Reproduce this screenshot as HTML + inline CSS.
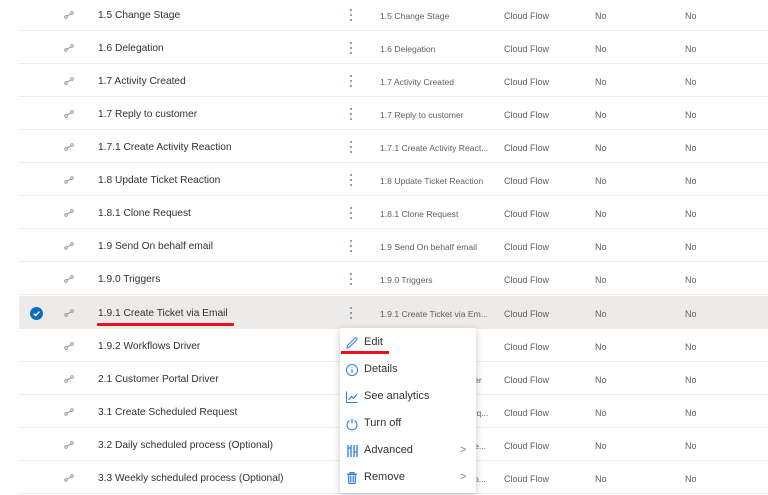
<!DOCTYPE html>
<html><head><style>
*{margin:0;padding:0;box-sizing:border-box}
body{width:768px;height:494px;overflow:hidden;background:#fff;font-family:"Segoe UI","Liberation Sans",sans-serif;color:#323130;position:relative}
.w{position:absolute;left:0;top:1px;width:768px;height:494px}
.r{position:absolute;left:19px;width:749px;height:33px;border-bottom:1px solid #edebe9}
.r.sel{background:#edebe9}
.r span{position:absolute;top:10px;white-space:nowrap;line-height:16px}
.n{left:79px;font-size:10.2px}
.c2{left:361px;font-size:8.6px;color:#605e5c;width:112px;overflow:hidden}
.c3{left:485px;font-size:9px;color:#605e5c}
.c4{left:576px;font-size:9px;color:#605e5c}
.c5{left:666px;font-size:9px;color:#605e5c}
.ic{position:absolute;left:45px;top:13px}
.dots{position:absolute;left:331px;top:11px;width:2px;height:14px}
.dots i{display:block;width:2px;height:2px;background:#6b7fa8;border-radius:1px;margin-bottom:3px}
.menu{position:absolute;left:340px;top:328px;width:136px;height:165px;background:#fff;box-shadow:0 2px 8px rgba(0,0,0,.22);border-radius:2px}
.mi{position:absolute;left:0;width:136px;height:27px;font-size:11px}
.mi span{position:absolute;left:24px;top:7px}
.mi svg{position:absolute;left:5px;top:7px}
.ch{position:absolute;left:120px;top:7px;color:#8a8886;font-size:11px}
</style></head><body>
<div class="w">
<div class="r" style="top:-3px"><svg class="ic" width="10" height="8" viewBox="0 0 10 8"><circle cx="2" cy="6" r="1.3" fill="none" stroke="#8a8886" stroke-width=".8"/><circle cx="8" cy="2" r="1.3" fill="none" stroke="#8a8886" stroke-width=".8"/><path d="M3 5L7 3" stroke="#8a8886" stroke-width=".8"/></svg><div class="dots"><i></i><i></i><i></i></div><span class="n">1.5 Change Stage</span><span class="c2">1.5 Change Stage</span><span class="c3">Cloud Flow</span><span class="c4">No</span><span class="c5">No</span></div>
<div class="r" style="top:30px"><svg class="ic" width="10" height="8" viewBox="0 0 10 8"><circle cx="2" cy="6" r="1.3" fill="none" stroke="#8a8886" stroke-width=".8"/><circle cx="8" cy="2" r="1.3" fill="none" stroke="#8a8886" stroke-width=".8"/><path d="M3 5L7 3" stroke="#8a8886" stroke-width=".8"/></svg><div class="dots"><i></i><i></i><i></i></div><span class="n">1.6 Delegation</span><span class="c2">1.6 Delegation</span><span class="c3">Cloud Flow</span><span class="c4">No</span><span class="c5">No</span></div>
<div class="r" style="top:63px"><svg class="ic" width="10" height="8" viewBox="0 0 10 8"><circle cx="2" cy="6" r="1.3" fill="none" stroke="#8a8886" stroke-width=".8"/><circle cx="8" cy="2" r="1.3" fill="none" stroke="#8a8886" stroke-width=".8"/><path d="M3 5L7 3" stroke="#8a8886" stroke-width=".8"/></svg><div class="dots"><i></i><i></i><i></i></div><span class="n">1.7 Activity Created</span><span class="c2">1.7 Activity Created</span><span class="c3">Cloud Flow</span><span class="c4">No</span><span class="c5">No</span></div>
<div class="r" style="top:96px"><svg class="ic" width="10" height="8" viewBox="0 0 10 8"><circle cx="2" cy="6" r="1.3" fill="none" stroke="#8a8886" stroke-width=".8"/><circle cx="8" cy="2" r="1.3" fill="none" stroke="#8a8886" stroke-width=".8"/><path d="M3 5L7 3" stroke="#8a8886" stroke-width=".8"/></svg><div class="dots"><i></i><i></i><i></i></div><span class="n">1.7 Reply to customer</span><span class="c2">1.7 Reply to customer</span><span class="c3">Cloud Flow</span><span class="c4">No</span><span class="c5">No</span></div>
<div class="r" style="top:129px"><svg class="ic" width="10" height="8" viewBox="0 0 10 8"><circle cx="2" cy="6" r="1.3" fill="none" stroke="#8a8886" stroke-width=".8"/><circle cx="8" cy="2" r="1.3" fill="none" stroke="#8a8886" stroke-width=".8"/><path d="M3 5L7 3" stroke="#8a8886" stroke-width=".8"/></svg><div class="dots"><i></i><i></i><i></i></div><span class="n">1.7.1 Create Activity Reaction</span><span class="c2">1.7.1 Create Activity React...</span><span class="c3">Cloud Flow</span><span class="c4">No</span><span class="c5">No</span></div>
<div class="r" style="top:162px"><svg class="ic" width="10" height="8" viewBox="0 0 10 8"><circle cx="2" cy="6" r="1.3" fill="none" stroke="#8a8886" stroke-width=".8"/><circle cx="8" cy="2" r="1.3" fill="none" stroke="#8a8886" stroke-width=".8"/><path d="M3 5L7 3" stroke="#8a8886" stroke-width=".8"/></svg><div class="dots"><i></i><i></i><i></i></div><span class="n">1.8 Update Ticket Reaction</span><span class="c2">1.8 Update Ticket Reaction</span><span class="c3">Cloud Flow</span><span class="c4">No</span><span class="c5">No</span></div>
<div class="r" style="top:195px"><svg class="ic" width="10" height="8" viewBox="0 0 10 8"><circle cx="2" cy="6" r="1.3" fill="none" stroke="#8a8886" stroke-width=".8"/><circle cx="8" cy="2" r="1.3" fill="none" stroke="#8a8886" stroke-width=".8"/><path d="M3 5L7 3" stroke="#8a8886" stroke-width=".8"/></svg><div class="dots"><i></i><i></i><i></i></div><span class="n">1.8.1 Clone Request</span><span class="c2">1.8.1 Clone Request</span><span class="c3">Cloud Flow</span><span class="c4">No</span><span class="c5">No</span></div>
<div class="r" style="top:228px"><svg class="ic" width="10" height="8" viewBox="0 0 10 8"><circle cx="2" cy="6" r="1.3" fill="none" stroke="#8a8886" stroke-width=".8"/><circle cx="8" cy="2" r="1.3" fill="none" stroke="#8a8886" stroke-width=".8"/><path d="M3 5L7 3" stroke="#8a8886" stroke-width=".8"/></svg><div class="dots"><i></i><i></i><i></i></div><span class="n">1.9 Send On behalf email</span><span class="c2">1.9 Send On behalf email</span><span class="c3">Cloud Flow</span><span class="c4">No</span><span class="c5">No</span></div>
<div class="r" style="top:261px"><svg class="ic" width="10" height="8" viewBox="0 0 10 8"><circle cx="2" cy="6" r="1.3" fill="none" stroke="#8a8886" stroke-width=".8"/><circle cx="8" cy="2" r="1.3" fill="none" stroke="#8a8886" stroke-width=".8"/><path d="M3 5L7 3" stroke="#8a8886" stroke-width=".8"/></svg><div class="dots"><i></i><i></i><i></i></div><span class="n">1.9.0 Triggers</span><span class="c2">1.9.0 Triggers</span><span class="c3">Cloud Flow</span><span class="c4">No</span><span class="c5">No</span></div>
<div class="r sel" style="top:295px;height:33px"><svg style="position:absolute;left:11px;top:11px" width="13" height="13" viewBox="0 0 13 13"><circle cx="6.5" cy="6.5" r="6.5" fill="#0f6cbd"/><path d="M3.8 6.7L5.7 8.5L9.3 4.6" stroke="#fff" stroke-width="1.4" fill="none"/></svg><svg class="ic" width="10" height="8" viewBox="0 0 10 8"><circle cx="2" cy="6" r="1.3" fill="none" stroke="#8a8886" stroke-width=".8"/><circle cx="8" cy="2" r="1.3" fill="none" stroke="#8a8886" stroke-width=".8"/><path d="M3 5L7 3" stroke="#8a8886" stroke-width=".8"/></svg><div class="dots"><i></i><i></i><i></i></div><span class="n">1.9.1 Create Ticket via Email</span><span class="c2">1.9.1 Create Ticket via Em...</span><span class="c3">Cloud Flow</span><span class="c4">No</span><span class="c5">No</span>
<div style="position:absolute;left:78px;top:27px;width:137px;height:3px;background:#e8101b;border-radius:1px"></div></div>
<div class="r" style="top:328px"><svg class="ic" width="10" height="8" viewBox="0 0 10 8"><circle cx="2" cy="6" r="1.3" fill="none" stroke="#8a8886" stroke-width=".8"/><circle cx="8" cy="2" r="1.3" fill="none" stroke="#8a8886" stroke-width=".8"/><path d="M3 5L7 3" stroke="#8a8886" stroke-width=".8"/></svg><span class="n">1.9.2 Workflows Driver</span><span class="c2">1.9.2 Workflows Driver</span><span class="c3">Cloud Flow</span><span class="c4">No</span><span class="c5">No</span></div>
<div class="r" style="top:361px"><svg class="ic" width="10" height="8" viewBox="0 0 10 8"><circle cx="2" cy="6" r="1.3" fill="none" stroke="#8a8886" stroke-width=".8"/><circle cx="8" cy="2" r="1.3" fill="none" stroke="#8a8886" stroke-width=".8"/><path d="M3 5L7 3" stroke="#8a8886" stroke-width=".8"/></svg><span class="n">2.1 Customer Portal Driver</span><span class="c2">2.1 Customer Portal Driver</span><span class="c3">Cloud Flow</span><span class="c4">No</span><span class="c5">No</span></div>
<div class="r" style="top:394px"><svg class="ic" width="10" height="8" viewBox="0 0 10 8"><circle cx="2" cy="6" r="1.3" fill="none" stroke="#8a8886" stroke-width=".8"/><circle cx="8" cy="2" r="1.3" fill="none" stroke="#8a8886" stroke-width=".8"/><path d="M3 5L7 3" stroke="#8a8886" stroke-width=".8"/></svg><span class="n">3.1 Create Scheduled Request</span><span class="c2">3.1 Create Scheduled Req...</span><span class="c3">Cloud Flow</span><span class="c4">No</span><span class="c5">No</span></div>
<div class="r" style="top:427px"><svg class="ic" width="10" height="8" viewBox="0 0 10 8"><circle cx="2" cy="6" r="1.3" fill="none" stroke="#8a8886" stroke-width=".8"/><circle cx="8" cy="2" r="1.3" fill="none" stroke="#8a8886" stroke-width=".8"/><path d="M3 5L7 3" stroke="#8a8886" stroke-width=".8"/></svg><span class="n">3.2 Daily scheduled process (Optional)</span><span class="c2">3.2 Daily scheduled proce...</span><span class="c3">Cloud Flow</span><span class="c4">No</span><span class="c5">No</span></div>
<div class="r" style="top:460px"><svg class="ic" width="10" height="8" viewBox="0 0 10 8"><circle cx="2" cy="6" r="1.3" fill="none" stroke="#8a8886" stroke-width=".8"/><circle cx="8" cy="2" r="1.3" fill="none" stroke="#8a8886" stroke-width=".8"/><path d="M3 5L7 3" stroke="#8a8886" stroke-width=".8"/></svg><span class="n">3.3 Weekly scheduled process (Optional)</span><span class="c2">3.3 Weekly scheduled pro...</span><span class="c3">Cloud Flow</span><span class="c4">No</span><span class="c5">No</span></div>
</div>

<div class="menu">
<div class="mi" style="top:1px"><svg width="14" height="14" viewBox="0 0 14 14"><path d="M2 12L2.7 9.3L9.8 2.2a1.2 1.2 0 0 1 1.8 1.8L4.5 11.1Z" fill="none" stroke="#2b7de9" stroke-width="1"/></svg><span>Edit</span>
<div style="position:absolute;left:1px;top:22px;width:48px;height:3px;background:#e8101b"></div></div>
<div class="mi" style="top:28px"><svg width="14" height="14" viewBox="0 0 14 14"><circle cx="7" cy="7" r="5.5" fill="none" stroke="#2b7de9" stroke-width="1"/><path d="M7 6v4M7 4v.8" stroke="#2b7de9" stroke-width="1.1"/></svg><span>Details</span></div>
<div class="mi" style="top:55px"><svg width="14" height="14" viewBox="0 0 14 14"><path d="M1.5 1.5v11h11" fill="none" stroke="#2b7de9" stroke-width="1"/><path d="M3.5 10L6.5 6.5L8.5 8.5L12 4" fill="none" stroke="#2b7de9" stroke-width="1"/></svg><span>See analytics</span></div>
<div class="mi" style="top:82px"><svg width="14" height="14" viewBox="0 0 14 14"><path d="M4.5 3.5a5 5 0 1 0 5 0M7 1.5v5" fill="none" stroke="#2b7de9" stroke-width="1.1"/></svg><span>Turn off</span></div>
<div class="mi" style="top:109px"><svg width="14" height="14" viewBox="0 0 14 14"><path d="M3 1v12M6 1v12M3 4h3M9 1v12M12 1v12M9 8h3" fill="none" stroke="#2b7de9" stroke-width="1.3"/></svg><span>Advanced</span><span class="ch" style="left:120px">&gt;</span></div>
<div class="mi" style="top:136px"><svg width="14" height="14" viewBox="0 0 14 14"><path d="M2 3h10M5 3V1.5h4V3M3.2 3.5l.6 9h6.4l.6-9Z" fill="#cfe0f8" stroke="#2b7de9" stroke-width="1"/><path d="M5.7 5v6M8.3 5v6" stroke="#2b7de9"/></svg><span>Remove</span><span class="ch" style="left:120px">&gt;</span></div>
</div>
</body></html>
